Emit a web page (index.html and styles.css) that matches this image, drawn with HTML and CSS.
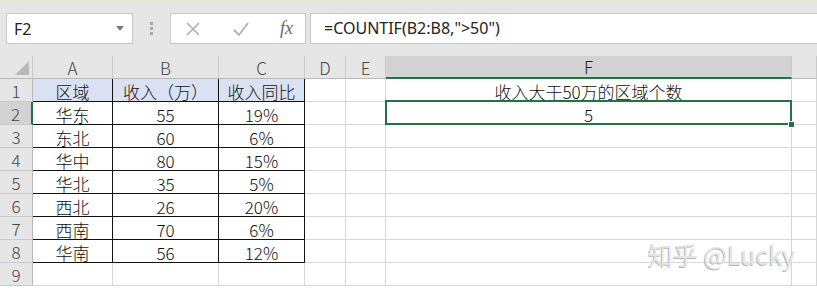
FILE: index.html
```html
<!DOCTYPE html>
<html>
  <head>
    <meta charset="utf-8" />
    <link rel="stylesheet" href="styles.css">
  </head>
  <body>
    <div class="toolbar">
      <div class="namebox">
        <span>F2</span>
        <svg class="drop" width="8" height="5" viewBox="0 0 8 5"><path d="M0 0h8L4 5z" fill="#7a7a7a"/></svg>
      </div>
      <div class="grip"><i></i><i></i><i></i></div>
      <div class="fxbox">
        <svg width="16" height="16" viewBox="0 0 16 16"><path d="M2 2l12 12M14 2L2 14" stroke="#b0b0b0" stroke-width="1.6" fill="none"/></svg>
        <svg width="18" height="16" viewBox="0 0 18 16"><path d="M2 9l5 5L16 2" stroke="#b0b0b0" stroke-width="1.8" fill="none"/></svg>
        <span class="fx">fx</span>
      </div>
      <div class="formula">=COUNTIF(B2:B8,"&gt;50")</div>
    </div>

    <div class="sheet">
      <div class="hd corner"><span class="tri"></span></div>
      <div class="hd">A</div>
      <div class="hd">B</div>
      <div class="hd">C</div>
      <div class="hd">D</div>
      <div class="hd">E</div>
      <div class="hd sel-col">F</div>
      <div class="hd"></div>

      <div class="rh">1</div>
      <div class="c t head">区域</div>
      <div class="c t head">收入（万）</div>
      <div class="c t head">收入同比</div>
      <div class="c"></div>
      <div class="c"></div>
      <div class="c title">收入大于50万的区域个数</div>
      <div class="c"></div>

      <div class="rh sel-row">2</div>
      <div class="c t">华东</div>
      <div class="c t">55</div>
      <div class="c t">19%</div>
      <div class="c"></div>
      <div class="c"></div>
      <div class="c active">5<span class="handle"></span></div>
      <div class="c"></div>

      <div class="rh">3</div>
      <div class="c t">东北</div>
      <div class="c t">60</div>
      <div class="c t">6%</div>
      <div class="c"></div>
      <div class="c"></div>
      <div class="c"></div>
      <div class="c"></div>

      <div class="rh">4</div>
      <div class="c t">华中</div>
      <div class="c t">80</div>
      <div class="c t">15%</div>
      <div class="c"></div>
      <div class="c"></div>
      <div class="c"></div>
      <div class="c"></div>

      <div class="rh">5</div>
      <div class="c t">华北</div>
      <div class="c t">35</div>
      <div class="c t">5%</div>
      <div class="c"></div>
      <div class="c"></div>
      <div class="c"></div>
      <div class="c"></div>

      <div class="rh">6</div>
      <div class="c t">西北</div>
      <div class="c t">26</div>
      <div class="c t">20%</div>
      <div class="c"></div>
      <div class="c"></div>
      <div class="c"></div>
      <div class="c"></div>

      <div class="rh">7</div>
      <div class="c t">西南</div>
      <div class="c t">70</div>
      <div class="c t">6%</div>
      <div class="c"></div>
      <div class="c"></div>
      <div class="c"></div>
      <div class="c"></div>

      <div class="rh">8</div>
      <div class="c t">华南</div>
      <div class="c t">56</div>
      <div class="c t">12%</div>
      <div class="c"></div>
      <div class="c"></div>
      <div class="c"></div>
      <div class="c"></div>

      <div class="rh">9</div>
      <div class="c"></div>
      <div class="c"></div>
      <div class="c"></div>
      <div class="c"></div>
      <div class="c"></div>
      <div class="c"></div>
      <div class="c"></div>
    </div>

    <div class="watermark">知乎 @Lucky</div>
  </body>
</html>
```

FILE: styles.css
```css
* {
  box-sizing: border-box;
}

body {
  margin: 0;
  background: #fff;
  font-family: "Noto Sans CJK SC", "Noto Sans", sans-serif;
  color: #111;
  position: relative;
  overflow: hidden;
}

/* formula bar */
.toolbar {
  height: 57px;
  background: #e6e6e6;
  border-top: 1px solid #eee8d2;
  display: flex;
  align-items: flex-start;
  padding-top: 12px;
}

.namebox {
  margin-left: 6px;
  width: 127px;
  height: 31px;
  background: #fff;
  border: 1px solid #c8c8c8;
  display: flex;
  align-items: center;
  justify-content: space-between;
  padding: 0 8px 0 7px;
  font-family: "Noto Sans", sans-serif;
  font-size: 16px;
  color: #222;
}

.grip {
  width: 37px;
  height: 31px;
  display: flex;
  flex-direction: column;
  align-items: center;
  justify-content: center;
  gap: 2px;
}

.grip i {
  width: 3px;
  height: 3px;
  background: #a8a8a8;
}

.fxbox {
  width: 136px;
  height: 31px;
  background: #fff;
  border: 1px solid #c8c8c8;
  display: flex;
  align-items: center;
  justify-content: space-between;
  padding: 0 12px 0 14px;
}

.fx {
  font-family: "Liberation Serif", serif;
  font-style: italic;
  font-size: 18px;
  color: #666;
}

.formula {
  flex: 1;
  margin-left: 4px;
  height: 31px;
  background: #fff;
  border: 1px solid #c8c8c8;
  border-right: none;
  padding-left: 13px;
  line-height: 29px;
  font-family: "Noto Sans", sans-serif;
  font-size: 16px;
  color: #222;
}

/* grid */
.sheet {
  display: grid;
  grid-template-columns: 33px 80px 106px 86px 41px 40px 406px 1fr;
  grid-auto-rows: 23px;
  margin-top: -1px;
}

.hd,
.rh {
  background: #e6e6e6;
  border-right: 1px solid #cacaca;
  border-bottom: 1px solid #b8b8b8;
  display: flex;
  align-items: center;
  justify-content: center;
  font-size: 17px;
  font-weight: 300;
  color: #444;
}

.rh {
  border-bottom-color: #cacaca;
  border-right-color: #b8b8b8;
}

.corner {
  position: relative;
}

.tri {
  position: absolute;
  right: 3px;
  bottom: 3px;
  width: 14px;
  height: 14px;
  background: #b8b8b8;
  clip-path: polygon(100% 0, 100% 100%, 0 100%);
}

.sel-col {
  background: #d2d2d2;
  border-bottom: 2px solid #217346;
  color: #222;
}

.sel-row {
  background: #d2d2d2;
  border-right: 2px solid #217346;
}

.c {
  border-right: 1px solid #d6d6d6;
  border-bottom: 1px solid #d6d6d6;
  display: flex;
  align-items: center;
  justify-content: center;
  font-size: 17px;
  font-weight: 300;
  line-height: 1;
  padding-top: 2px;
}

.t {
  border-right-color: #111;
  border-bottom-color: #111;
}

.head {
  background: #d9e1f2;
}

.active {
  position: relative;
}

.active::before {
  content: "";
  position: absolute;
  top: -2px;
  left: -1px;
  right: -1px;
  bottom: -1px;
  border: 2px solid #217346;
}

.handle {
  position: absolute;
  right: -4px;
  bottom: -4px;
  width: 7px;
  height: 7px;
  background: #217346;
  border: 1px solid #fff;
}

.watermark {
  position: absolute;
  left: 648px;
  top: 236px;
  font-size: 25px;
  color: #e6e6e6;
  text-shadow: -1px 1px 0 #b8b8b8;
}
```
